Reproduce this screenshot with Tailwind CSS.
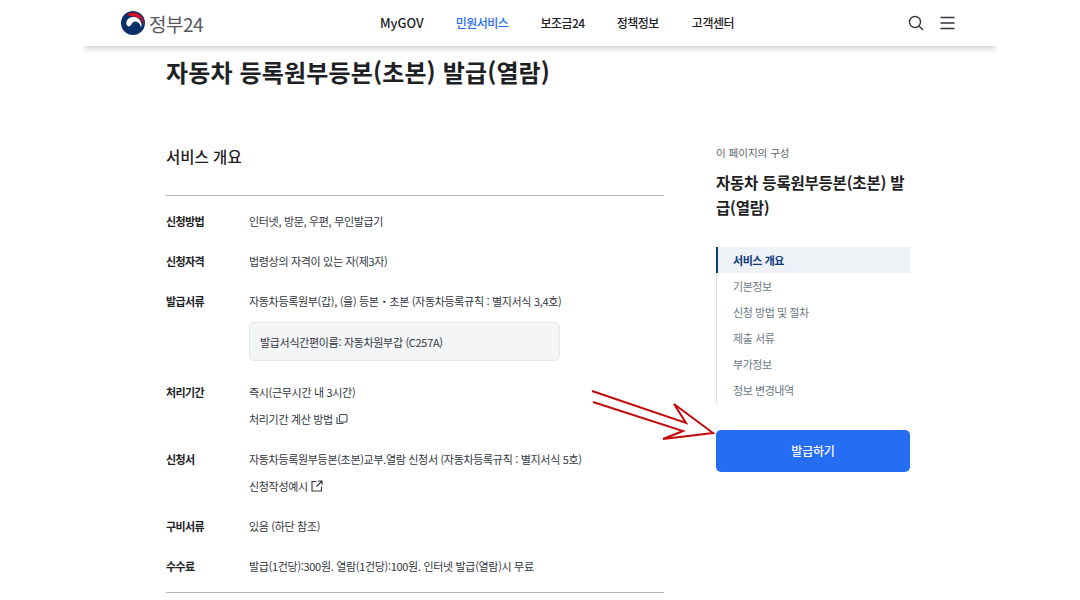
<!DOCTYPE html>
<html lang="ko"><head><meta charset="utf-8">
<script src="https://cdn.jsdelivr.net/npm/@tailwindcss/browser@4"></script></head>
<body class="bg-white font-['Noto_Sans_CJK_KR','Noto_Sans',sans-serif] text-[#1e2124]">
<div class="relative mx-auto h-[600px] w-[912px] overflow-hidden">
<header class="flex h-[46px] items-center bg-white pl-[37px] pr-[41px] shadow-[0_2px_6px_rgba(0,0,0,0.22)]">
  <div class="flex w-[259px] items-center gap-[4px]">
    <svg class="h-6 w-6" viewBox="0 0 24 24"><circle cx="12" cy="12" r="12" fill="#0b2f66"/><path d="M6 3.500C9.500 1 14.500 .8 18.300 3.600 21.800 6.200 23.500 10.200 23 14 22 10.500 19.500 7.400 15.800 6.300 12.500 5.300 9.500 5.500 6 3.500z" fill="#d0112b"/><path d="M5.300 12.200C5.300 8.300 9 5.400 13.300 6 17.800 6.600 20.500 10.300 20.500 13.800 20.500 15 20.300 15.800 20 16.500 19.300 12.800 16.800 10.300 14.200 10.400 11.800 10.500 11 12.300 10 14 9 15.500 7.800 15.800 6.800 15 5.800 14.300 5.300 13.300 5.300 12.200z" fill="#fff"/></svg>
    <span class="text-[19px] leading-none tracking-[-0.5px] text-[#55595f]">정부24</span>
  </div>
  <nav class="flex items-center gap-[32px] text-[12px] font-medium tracking-[-0.5px] text-[#1e2124]">
    <span class="text-[12.800px] tracking-normal">MyGOV</span><span class="text-[#256ef4]">민원서비스</span><span>보조금24</span><span>정책정보</span><span class="ml-px">고객센터</span>
  </nav>
  <div class="ml-auto flex items-center gap-[16px]">
    <svg class="h-[16px] w-[16px]" viewBox="0 0 16 16" fill="none" stroke="#33363d" stroke-width="1.400"><circle cx="7" cy="7" r="5.500"/><path d="M11 11l4 4"/></svg>
    <svg class="h-[14px] w-[15px]" viewBox="0 0 15 14" fill="none" stroke="#33363d" stroke-width="1.300"><path d="M0.500 1.500h14M0.500 7h14M0.500 12.500h14"/></svg>
  </div>
</header>
<main class="pl-[82px] pr-[86px]">
  <h1 class="mt-[7px] text-[24px] font-bold leading-[38px] tracking-[0.15px]">자동차 등록원부등본(초본) 발급(열람)</h1>
  <div class="mt-[54px] flex justify-between">
    <section class="w-[498px]">
      <h2 class="text-[15.500px] font-medium leading-[22px]">서비스 개요</h2>
      <div class="mt-[28px] border-t border-b border-[#b1b8be] pt-[15px] pb-[16px] text-[11px] leading-[20px] tracking-[-0.32px] text-[#33363d]">
        <div class="flex"><b class="w-[83px] font-bold tracking-[-0.6px] text-[#1e2124]">신청방법</b><span>인터넷, 방문, 우편, 무인발급기</span></div>
        <div class="mt-[20px] flex"><b class="w-[83px] font-bold tracking-[-0.6px] text-[#1e2124]">신청자격</b><span>법령상의 자격이 있는 자(제3자)</span></div>
        <div class="mt-[20px] flex"><b class="w-[83px] font-bold tracking-[-0.6px] text-[#1e2124]">발급서류</b>
          <div><div>자동차등록원부(갑), (을) 등본・초본 (자동차등록규칙 : 별지서식 3,4호)</div>
          <div class="mt-[11px] flex h-[39px] w-[311px] items-center rounded-[5px] border border-[#e6e8ea] bg-[#f4f5f6] px-[10px]">발급서식간편이름: 자동차원부갑 (C257A)</div></div></div>
        <div class="mt-[21px] flex"><b class="w-[83px] font-bold tracking-[-0.6px] text-[#1e2124]">처리기간</b>
          <div><div>즉시(근무시간 내 3시간)</div>
          <div class="mt-[7px] flex items-center gap-[3px]">처리기간 계산 방법
            <svg class="h-[12px] w-[12px]" viewBox="0 0 12 12" fill="none" stroke="#464c53" stroke-width="1.100"><rect x="3.500" y="1.500" width="7.500" height="7.500" rx="1"/><path d="M1 4v6.500h6.500"/></svg></div></div></div>
        <div class="mt-[20px] flex"><b class="w-[83px] font-bold tracking-[-0.6px] text-[#1e2124]">신청서</b>
          <div><div>자동차등록원부등본(초본)교부.열람 신청서 (자동차등록규칙 : 별지서식 5호)</div>
          <div class="mt-[7px] flex items-center gap-[3px]">신청작성예시
            <svg class="h-[12px] w-[12px]" viewBox="0 0 12 12" fill="none" stroke="#33363d" stroke-width="1.100"><path d="M5.500 1.500H1v9.500h9.500V6.500M7 1h4v4M11 1L5.500 6.500"/></svg></div></div></div>
        <div class="mt-[20px] flex"><b class="w-[83px] font-bold tracking-[-0.6px] text-[#1e2124]">구비서류</b><span>있음 (하단 참조)</span></div>
        <div class="mt-[20px] flex"><b class="w-[83px] font-bold tracking-[-0.6px] text-[#1e2124]">수수료</b><span>발급(1건당):300원. 열람(1건당):100원. 인터넷 발급(열람)시 무료</span></div>
      </div>
    </section>
    <aside class="w-[194px]">
      <p class="text-[10.500px] leading-[16px] text-[#58616a]">이 페이지의 구성</p>
      <h3 class="mt-[9px] break-all text-[15.500px] font-bold leading-[25px] tracking-[-0.2px]">자동차 등록원부등본(초본) 발급(열람)</h3>
      <ul class="mt-[27px] border-l border-[#d6e0eb] text-[11px] tracking-[-0.45px] text-[#6d7882]">
        <li class="-ml-px flex h-[26px] items-center border-l-2 border-[#0b3b7c] bg-[#eef2f7] pl-[15px] font-bold text-[#0b3b7c]">서비스 개요</li>
        <li class="flex h-[26px] items-center pl-[16px]">기본정보</li>
        <li class="flex h-[26px] items-center pl-[16px]">신청 방법 및 절차</li>
        <li class="flex h-[26px] items-center pl-[16px]">제출 서류</li>
        <li class="flex h-[26px] items-center pl-[16px]">부가정보</li>
        <li class="flex h-[26px] items-center pl-[16px]">정보 변경내역</li>
      </ul>
      <button class="mt-[27px] h-[42px] w-full rounded-[5px] bg-[#256ef4] text-[12px] font-medium tracking-[-0.2px] text-white">발급하기</button>
    </aside>
  </div>
</main>
<svg class="pointer-events-none absolute left-[506px] top-[386px] h-[56px] w-[128px]" viewBox="0 0 128 56" fill="none" stroke="#c40a0a" stroke-width="2" stroke-linejoin="miter"><path d="M2 5L96 37 84 18 123 47 73 53 93 45 3 16"/></svg>
</div>
</body></html>
